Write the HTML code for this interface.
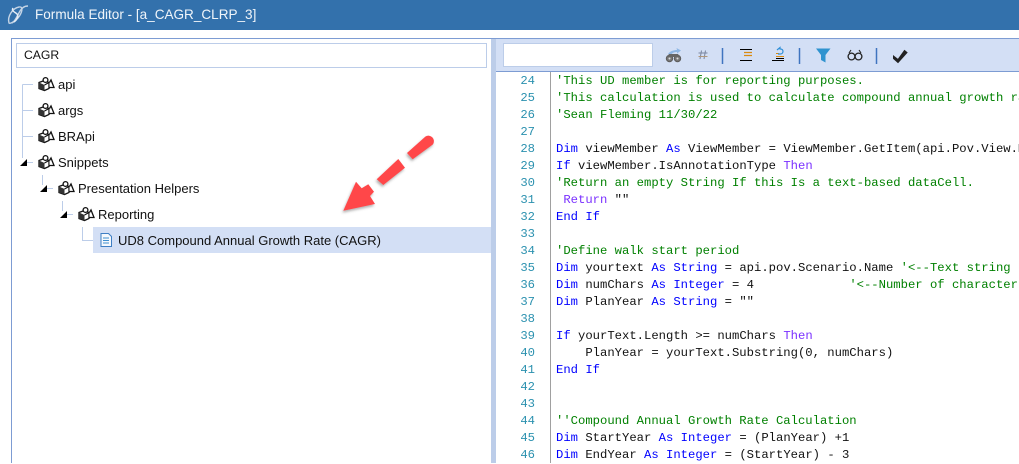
<!DOCTYPE html>
<html><head><meta charset="utf-8"><style>
html,body{margin:0;padding:0;width:1019px;height:463px;overflow:hidden;background:#fff}
div,svg{position:absolute}
.t{font-family:"Liberation Sans",sans-serif;font-size:13px;color:#111;white-space:nowrap;line-height:16px}
.n,.c{font-family:"Liberation Mono",monospace;font-size:12.22px;line-height:17px;white-space:pre;height:17px;margin-top:1px;overflow:hidden}
.n{left:500px;width:35px;text-align:right;color:#2b91af}
.c{left:556px;width:463px;color:#111}
b{font-weight:normal;color:#0000ff}
i{font-style:normal;color:#7a30ff}
u{text-decoration:none;color:#008000}
</style></head><body>
<div style="left:0;top:0;width:1019px;height:30px;background:#3371ac"></div>
<svg style="left:0;top:0" width="34" height="30" viewBox="0 0 34 30"><g fill="none" stroke="#c4d4e6" stroke-width="1.4"><path d="M9 23C7 16 13 8 19 7C24 6 22 13 18 18C14 22 10 24 9 23Z"/><path d="M12 23C15 22 17 16 20 11C22 8 24 6 28 6"/><path d="M13 8C11 11 15 12 17 14C19 16 17 20 14 22" stroke="#e6eef6"/></g></svg>
<div class="t" style="left:35px;top:6px;font-size:13.55px;color:#f0f5fa;line-height:18px">Formula Editor - [a_CAGR_CLRP_3]</div>

<div style="left:11px;top:38px;width:1008px;height:1px;background:#7d9cd3"></div>
<div style="left:11px;top:38px;width:1px;height:425px;background:#7d9cd3"></div>
<div style="left:16px;top:43px;width:469px;height:23px;border:1px solid #bccde9;background:#fff"></div>
<div class="t" style="left:24px;top:47px;font-size:12.2px">CAGR</div>

<svg style="left:0;top:0" width="130" height="260"><defs>
<g id="ic"><path d="M1 5.500L6.500 3.500L11 5.500V11.500L6.500 13.500L1 11.500Z" fill="#fff" stroke="#111" stroke-width="1.300"/><path d="M1 5.500L6.500 8V13.500L1 11.500Z" fill="#333"/><path d="M6.500 8L11 5.500" stroke="#111" stroke-width="1.200"/><circle cx="7.500" cy="3" r="2.400" fill="#fff" stroke="#111" stroke-width="1.300"/><path d="M11.500 5.500L13 3L16 10.500H11.500" fill="#fff" stroke="#111" stroke-width="1.300"/></g></defs>
<g stroke="#bccde9" fill="none"><path d="M22.500 84.500H33M22.500 84.500V158M22.500 110.500H33M22.500 136.500H33M27 162.500H33"/><path d="M42.500 175V185M47 188.500H53"/><path d="M62.500 201V211M67 214.500H73"/><path d="M82.500 227V240.500H93"/></g>
<path d="M20 166H27V159Z M40 192H47V185Z M60 218H67V211Z" fill="#000"/>
<use href="#ic" x="38" y="77"/><use href="#ic" x="38" y="103"/><use href="#ic" x="38" y="129"/><use href="#ic" x="38" y="155"/><use href="#ic" x="58" y="181"/><use href="#ic" x="78" y="207"/>
</svg>
<div class="t" style="left:58px;top:77px">api</div>
<div class="t" style="left:58px;top:103px">args</div>
<div class="t" style="left:58px;top:129px">BRApi</div>
<div class="t" style="left:58px;top:155px">Snippets</div>
<div class="t" style="left:78px;top:181px">Presentation Helpers</div>
<div class="t" style="left:98px;top:207px">Reporting</div>
<div style="left:93px;top:227px;width:398px;height:26px;background:#d3dff5"></div>
<svg style="left:100px;top:233px" width="13" height="15"><path d="M1 .5H8.500L11.500 3.500V13.500H1Z" fill="#f4f8fd" stroke="#3f7fc4"/><path d="M3 5H9M3 7.500H9M3 10H9" stroke="#3f8fd0"/></svg>
<div class="t" style="left:118px;top:233px">UD8 Compound Annual Growth Rate (CAGR)</div>

<svg style="left:330px;top:125px;overflow:visible" width="115" height="95"><defs><filter id="s" x="-20%" y="-20%" width="140%" height="140%"><feDropShadow dx="-1" dy="2" stdDeviation="1.200" flood-color="#555" flood-opacity=".45"/></filter></defs>
<g fill="#ff474a" filter="url(#s)"><path d="M13.300 85.700L26 56.700L31.700 63.300L38.300 59.300L44 66.700L40 71L45 79Z"/><path d="M46.700 54.300L68.300 34L75 42.700L53.300 60Z"/><path d="M77 28L95.500 11.500A5.500 5.500 0 0 1 102.800 19.500L82.700 34.300Z"/></g></svg>

<div style="left:491px;top:39px;width:5px;height:424px;background:#bccde9"></div>
<div style="left:496px;top:39px;width:523px;height:32px;background:#d3dff5"></div>
<div style="left:496px;top:71px;width:523px;height:1px;background:#7d9cd3"></div>
<div style="left:503px;top:43px;width:148px;height:22px;background:#fff;border:1px solid #bccde9"></div>
<svg style="left:660px;top:39px" width="260" height="32">
<path d="M8 15C10 12 14 11 17 11L16.500 9L21 11.500L17 14.500L17 13C14 13 12 14 11 16Z" fill="#8fb8e6"/><circle cx="9.500" cy="19.500" r="3.200" fill="#777" stroke="#5c5c5c"/><circle cx="17.500" cy="19.500" r="3.200" fill="#777" stroke="#5c5c5c"/><path d="M7 18L9 15H18L20 18Z" fill="#666"/><circle cx="9.500" cy="19.500" r="1" fill="#ddd"/><circle cx="17.500" cy="19.500" r="1" fill="#ddd"/>
<path d="M41.500 11.500L40 20M45.500 11.500L44 20M38.500 14H47.500" stroke="#7a86a0" fill="none"/><path d="M38.500 17.500H47.500" stroke="#b0977a"/>
<path d="M62.500 9V25" stroke="#3f74bf" stroke-width="1.500"/>
<path d="M80 10.500H92M80 21.500H92" stroke="#000"/><path d="M84 13.500H92M84 16.500H92" stroke="#d98a10" stroke-width="1.200"/>
<path d="M116 17.500H124M116 14.500H119" stroke="#d98a10"/>
<path d="M112 21.500H124M116 19.500H124" stroke="#000"/><path d="M117 11L120 8.500V10C124 9.500 124 15 120 15H118" fill="none" stroke="#2f8fd8" stroke-width="1.200"/>
<path d="M139.500 9V25" stroke="#3f74bf" stroke-width="1.500"/>
<path d="M156 9.500H170.500L165.500 16V23.500L161 21V16Z" fill="#2f93cf"/>
<circle cx="191.500" cy="17.500" r="3.400" fill="none" stroke="#222" stroke-width="1.300"/><circle cx="198.500" cy="17.500" r="3.400" fill="none" stroke="#222" stroke-width="1.300"/><path d="M189 14L191 11M201 14L199 11" stroke="#222" stroke-width="1.100"/>
<path d="M216.500 9V25" stroke="#3f74bf" stroke-width="1.500"/>
<path d="M233.500 17L238 20.500L244.500 11.500L247 13.500L238 23.500L233.500 19.500Z" fill="#222" stroke="#222"/>
</svg>

<div style="left:550px;top:72px;width:1px;height:391px;background:#a0a0a0"></div>
<div class="n" style="top:72px">24</div><div class="c" style="top:72px"><u>'This UD member is for reporting purposes.</u></div>
<div class="n" style="top:89px">25</div><div class="c" style="top:89px"><u>'This calculation is used to calculate compound annual growth rate</u></div>
<div class="n" style="top:106px">26</div><div class="c" style="top:106px"><u>'Sean Fleming 11/30/22</u></div>
<div class="n" style="top:123px">27</div>
<div class="n" style="top:140px">28</div><div class="c" style="top:140px"><b>Dim</b> viewMember <b>As</b> ViewMember = ViewMember.GetItem(api.Pov.View.MemberId)</div>
<div class="n" style="top:157px">29</div><div class="c" style="top:157px"><b>If</b> viewMember.IsAnnotationType <i>Then</i></div>
<div class="n" style="top:174px">30</div><div class="c" style="top:174px"><u>'Return an empty String If this Is a text-based dataCell.</u></div>
<div class="n" style="top:191px">31</div><div class="c" style="top:191px"> <i>Return</i> ""</div>
<div class="n" style="top:208px">32</div><div class="c" style="top:208px"><b>End If</b></div>
<div class="n" style="top:225px">33</div>
<div class="n" style="top:242px">34</div><div class="c" style="top:242px"><u>'Define walk start period</u></div>
<div class="n" style="top:259px">35</div><div class="c" style="top:259px"><b>Dim</b> yourtext <b>As String</b> = api.pov.Scenario.Name <u>'&lt;--Text string</u></div>
<div class="n" style="top:276px">36</div><div class="c" style="top:276px"><b>Dim</b> numChars <b>As Integer</b> = 4             <u>'&lt;--Number of characters</u></div>
<div class="n" style="top:293px">37</div><div class="c" style="top:293px"><b>Dim</b> PlanYear <b>As String</b> = ""</div>
<div class="n" style="top:310px">38</div>
<div class="n" style="top:327px">39</div><div class="c" style="top:327px"><b>If</b> yourText.Length &gt;= numChars <i>Then</i></div>
<div class="n" style="top:344px">40</div><div class="c" style="top:344px">    PlanYear = yourText.Substring(0, numChars)</div>
<div class="n" style="top:361px">41</div><div class="c" style="top:361px"><b>End If</b></div>
<div class="n" style="top:378px">42</div>
<div class="n" style="top:395px">43</div>
<div class="n" style="top:412px">44</div><div class="c" style="top:412px"><u>''Compound Annual Growth Rate Calculation</u></div>
<div class="n" style="top:429px">45</div><div class="c" style="top:429px"><b>Dim</b> StartYear <b>As Integer</b> = (PlanYear) +1</div>
<div class="n" style="top:446px">46</div><div class="c" style="top:446px"><b>Dim</b> EndYear <b>As Integer</b> = (StartYear) - 3</div>
</body></html>
